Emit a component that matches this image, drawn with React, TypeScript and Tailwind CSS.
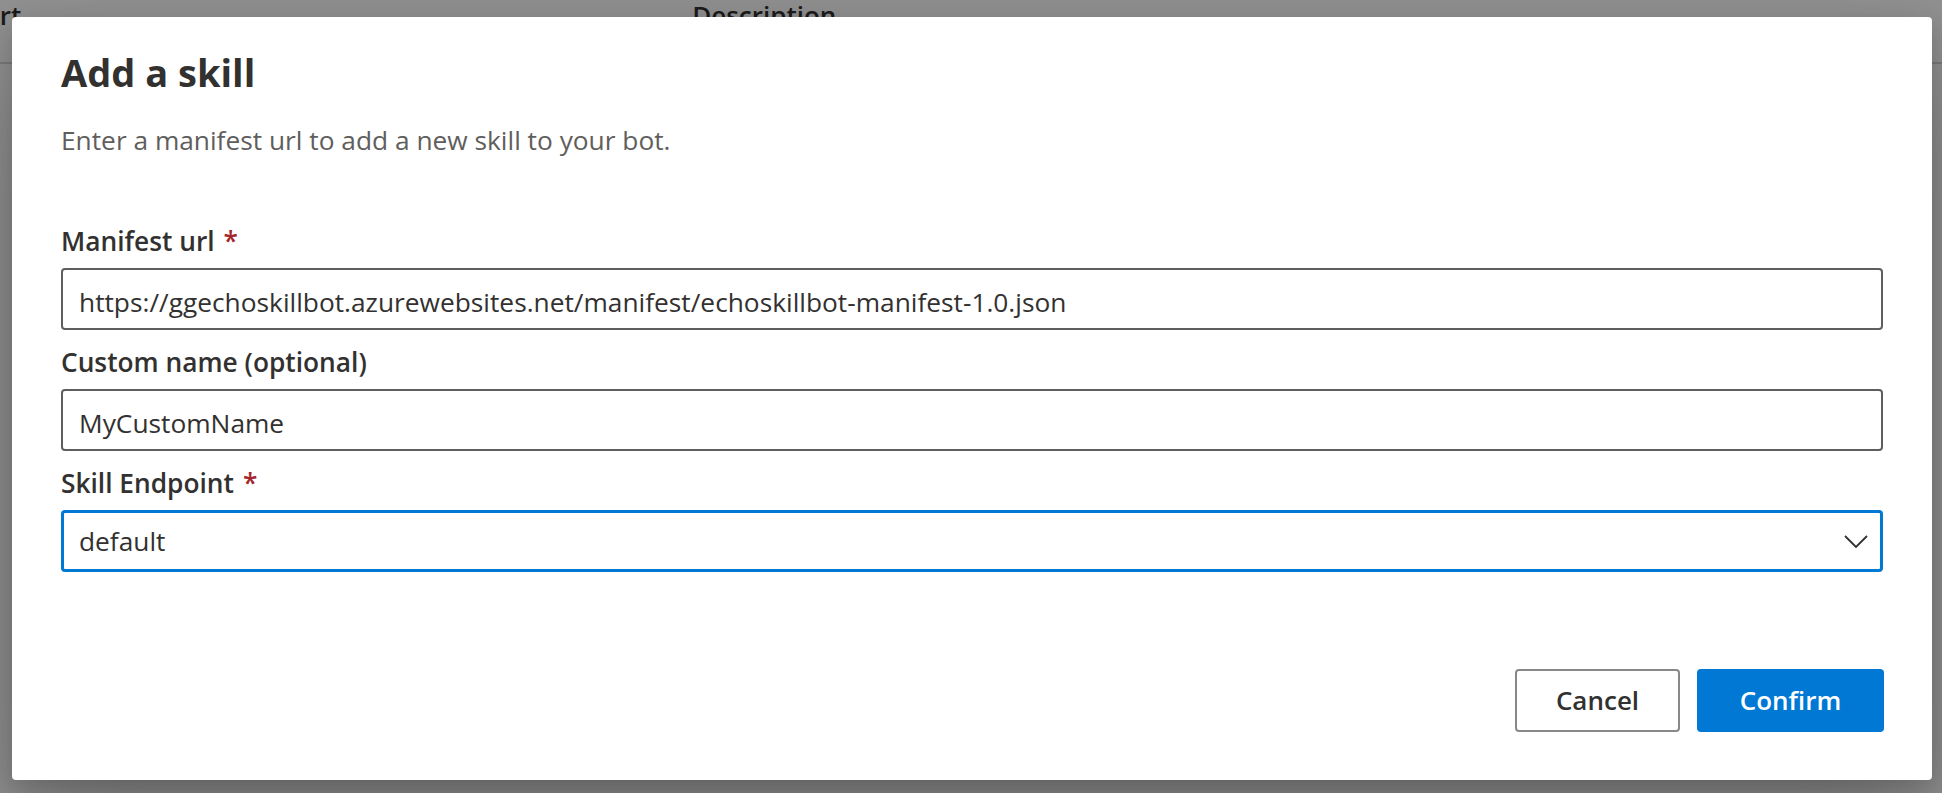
import React from "react";

/* ------------------------------------------------------------------ */
/*  Small pieces                                                       */
/* ------------------------------------------------------------------ */

function FieldLabel({ text, required }: { text: string; required?: boolean }) {
  return (
    <div className="pt-[13px] pb-[8px] text-[26.3px] leading-[38px] font-semibold text-[#323130]">
      {text}
      {required && <span className="ml-[9px] text-[#a4262c]">*</span>}
    </div>
  );
}

function TextField({ value }: { value: string }) {
  return (
    <div className="h-[62px] border-2 border-[#605e5c] rounded-[4px] pl-[16px] pt-[6px] text-[26.3px] leading-[52px] text-[#323130] whitespace-nowrap overflow-hidden">
      {value}
    </div>
  );
}

function Dropdown({ value }: { value: string }) {
  return (
    <div className="h-[62px] border-[3px] border-[#0078d4] rounded-[4px] pl-[15px] pr-[12px] flex items-start justify-between">
      <span className="pt-[2px] text-[26.3px] leading-[52px] text-[#323130]">{value}</span>
      <svg
        width="24"
        height="13"
        viewBox="0 0 24 13"
        className="mt-[22px] shrink-0"
        fill="none"
        stroke="#323130"
        strokeWidth="1.8"
      >
        <polyline points="1,1 12,12 23,1" />
      </svg>
    </div>
  );
}

/* ------------------------------------------------------------------ */
/*  Page                                                               */
/* ------------------------------------------------------------------ */

export default function App() {
  return (
    <div className="relative w-full h-[793px] overflow-hidden bg-white font-['Open_Sans',sans-serif]">
      {/* page behind the dialog */}
      <div className="flex h-[64px] border-b-2 border-[#d8d8d8] text-[26px] leading-[38px] font-semibold text-[#323130]">
        <span className="-mt-[4px] -ml-[40px]">Start</span>
        <span className="-mt-[4px] ml-[671px]">Description</span>
      </div>

      {/* overlay */}
      <div className="absolute inset-0 bg-black/[0.43]" />

      {/* dialog */}
      <div className="absolute left-[12px] top-[17px] w-[1920px] h-[763px] bg-white rounded-[4px] shadow-[0_50px_110px_rgba(0,0,0,0.22),0_9px_28px_rgba(0,0,0,0.18)] flex flex-col pt-[29px] px-[49px]">
        <h1 className="text-[38px] leading-[52px] font-bold text-[#323130]">Add a skill</h1>
        <p className="mt-[23px] text-[26.3px] leading-[38px] text-[#605e5c]">
          Enter a manifest url to add a new skill to your bot.
        </p>

        <div className="mt-[50px] flex flex-col">
          <FieldLabel text="Manifest url" required />
          <TextField value="https://ggechoskillbot.azurewebsites.net/manifest/echoskillbot-manifest-1.0.json" />
          <FieldLabel text="Custom name (optional)" />
          <TextField value="MyCustomName" />
          <FieldLabel text="Skill Endpoint" required />
          <Dropdown value="default" />
        </div>

        <div className="mt-[97px] flex justify-end gap-[17px] -mr-[1px]">
          <button className="w-[165px] h-[63px] border-2 border-[#8a8886] rounded-[4px] bg-white text-[26px] font-semibold text-[#323130]">
            Cancel
          </button>
          <button className="w-[187px] h-[63px] rounded-[4px] bg-[#0078d4] text-[26px] font-semibold text-white">
            Confirm
          </button>
        </div>
      </div>
    </div>
  );
}
